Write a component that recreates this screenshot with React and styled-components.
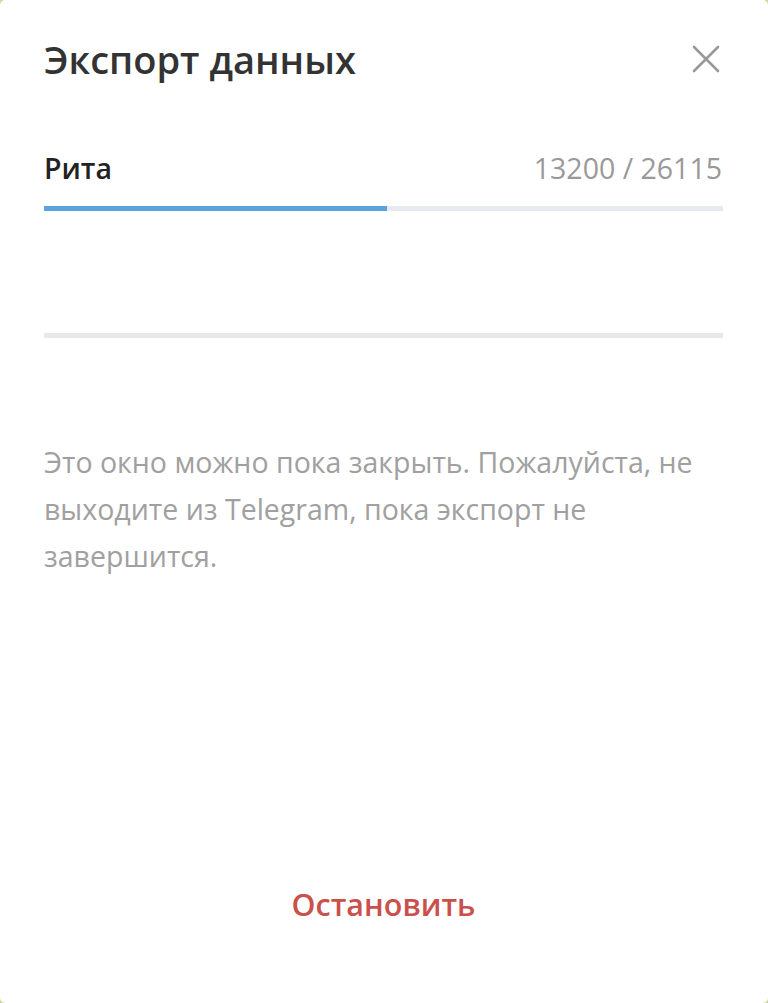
import styled, { createGlobalStyle } from 'styled-components';

const GlobalStyle = createGlobalStyle`
  html, body {
    margin: 0;
    padding: 0;
    background: #c9d99a;
  }
  body {
    font-family: 'Open Sans', 'Noto Sans', sans-serif;
  }
`;

const Box = styled.div`
  box-sizing: border-box;
  width: 768px;
  height: 1003px;
  background: #ffffff;
  border-radius: 5px;
  padding: 0 45px 0 44px;
  display: flex;
  flex-direction: column;
`;

const Header = styled.div`
  box-sizing: border-box;
  display: flex;
  align-items: center;
  justify-content: space-between;
  height: 124px;
  padding-bottom: 6px;
`;

const Title = styled.h1`
  margin: 0;
  font-size: 38px;
  line-height: 48px;
  font-weight: 600;
  color: #333333;
`;

const Close = styled.button`
  border: 0;
  background: none;
  padding: 0;
  margin: 0 2px 0 0;
  width: 30px;
  height: 30px;
  display: flex;
  align-items: center;
  justify-content: center;
  cursor: pointer;
`;

const Row = styled.div`
  display: flex;
  align-items: baseline;
  justify-content: space-between;
  margin-top: 26px;
  line-height: 36px;
`;

const Name = styled.div`
  font-size: 28.5px;
  font-weight: 600;
  color: #222222;
`;

const Count = styled.div`
  font-size: 28.5px;
  color: #999999;
  margin-right: 1px;
`;

const Track = styled.div`
  height: 5px;
  background: ${(p) => p.$bg};
  margin-top: ${(p) => p.$top}px;
`;

const Fill = styled.div`
  height: 100%;
  background: #5ba3df;
`;

const Note = styled.p`
  margin: 101px 0 0;
  font-size: 28.5px;
  line-height: 47px;
  color: #a0a0a0;
`;

const Footer = styled.div`
  margin-top: auto;
  display: flex;
  justify-content: center;
  padding-bottom: 79px;
`;

const StopButton = styled.button`
  border: 0;
  background: none;
  font-family: inherit;
  font-size: 30.5px;
  line-height: 40px;
  font-weight: 600;
  color: #c9504b;
  cursor: pointer;
  padding: 0;
`;

const done = 13200;
const total = 26115;

export default function App() {
  return (
    <>
      <GlobalStyle />
      <Box>
        <Header>
          <Title>Экспорт данных</Title>
          <Close aria-label="Закрыть">
            <svg width="28" height="28" viewBox="0 0 28 28">
              <path
                d="M2 2 L26 26 M26 2 L2 26"
                stroke="#999999"
                strokeWidth="2.6"
                strokeLinecap="round"
              />
            </svg>
          </Close>
        </Header>
        <Row>
          <Name>Рита</Name>
          <Count>
            {done} / {total}
          </Count>
        </Row>
        <Track $bg="#e7ebef" $top={20}>
          <Fill style={{ width: `${(done / total) * 100}%` }} />
        </Track>
        <Track $bg="#e8e8e8" $top={122} />
        <Note>
          Это окно можно пока закрыть. Пожалуйста, не выходите из Telegram,
          пока экспорт не завершится.
        </Note>
        <Footer>
          <StopButton>Остановить</StopButton>
        </Footer>
      </Box>
    </>
  );
}
